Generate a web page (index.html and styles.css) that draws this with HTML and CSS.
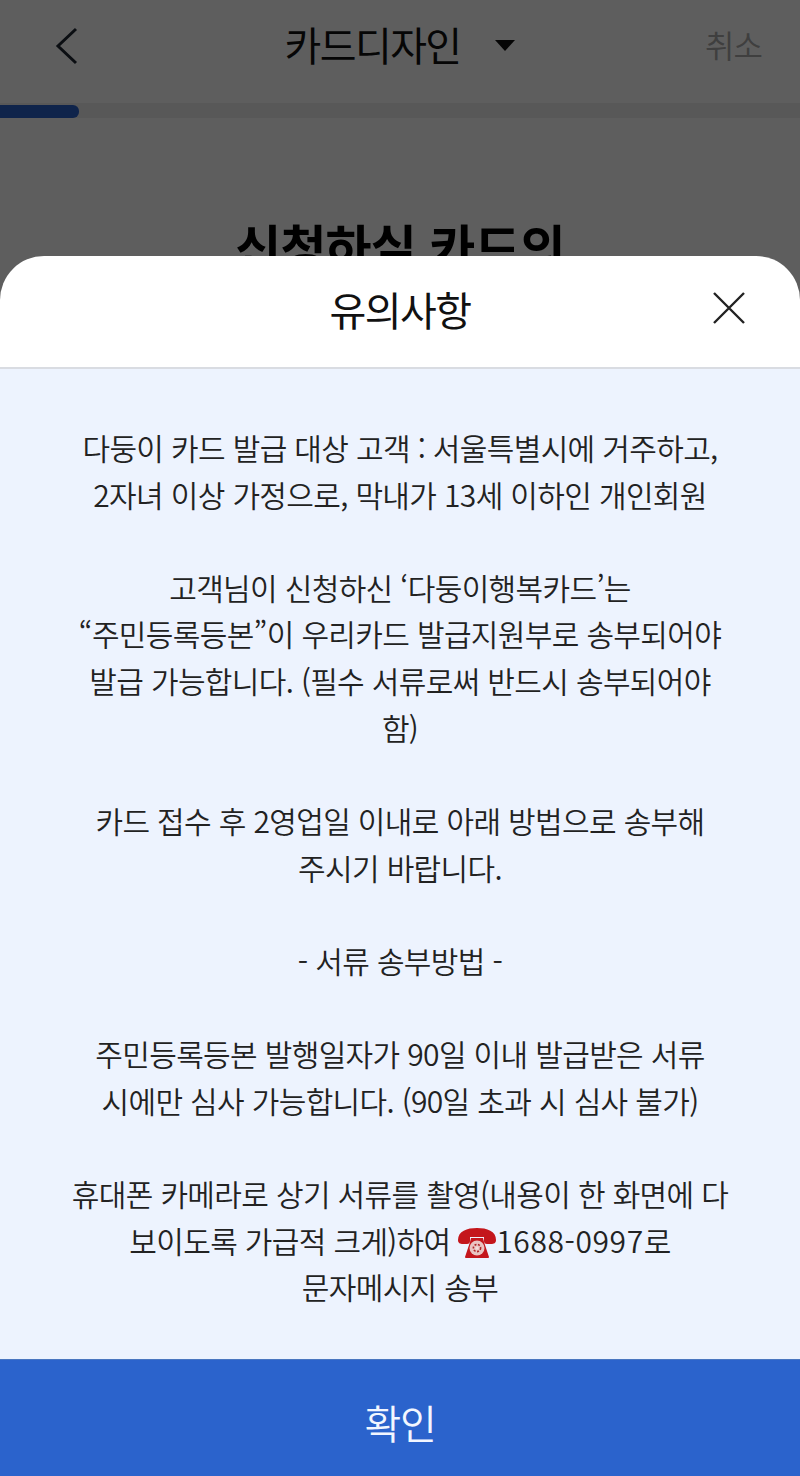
FILE: index.html
```html
<!DOCTYPE html>
<html lang="ko">
<head>
<meta charset="utf-8">
<title>유의사항</title>
<link rel="stylesheet" href="styles.css">
</head>
<body>
<div class="screen">
  <header class="topbar">
    <svg class="back" viewBox="0 0 26 40" width="26" height="40"><path d="M22 3 L4 20 L22 37" fill="none" stroke="#1f2733" stroke-width="3"/></svg>
    <div class="page-title"><span>카드디자인</span><i class="caret"></i></div>
    <span class="cancel">취소</span>
  </header>
  <div class="track"><div class="bar"></div></div>
  <h1 class="heading">신청하실 카드의</h1>
  <div class="dim"></div>
  <section class="sheet">
    <div class="sheet-head">
      <h2 class="sheet-title">유의사항</h2>
      <svg class="close" viewBox="0 0 34 34" width="34" height="34"><path d="M2 2 L32 32 M32 2 L2 32" fill="none" stroke="#222" stroke-width="2.4"/></svg>
    </div>
    <div class="sheet-body">
      <p>다둥이 카드 발급 대상 고객 : 서울특별시에 거주하고,<br>2자녀 이상 가정으로, 막내가 13세 이하인 개인회원</p>
      <p>고객님이 신청하신 ‘다둥이행복카드’는<br>“주민등록등본”이 우리카드 발급지원부로 송부되어야<br>발급 가능합니다. (필수 서류로써 반드시 송부되어야<br>함)</p>
      <p>카드 접수 후 2영업일 이내로 아래 방법으로 송부해<br>주시기 바랍니다.</p>
      <p>- 서류 송부방법 -</p>
      <p>주민등록등본 발행일자가 90일 이내 발급받은 서류<br>시에만 심사 가능합니다. (90일 초과 시 심사 불가)</p>
      <p>휴대폰 카메라로 상기 서류를 촬영(내용이 한 화면에 다<br>보이도록 가급적 크게)하여 <svg class="phone" viewBox="0 0 38 30" width="38" height="30"><path d="M0 12 C0 3 9 0 19 0 C29 0 38 3 38 12 C38 15 36 16 33 16 L29 16 C27 16 26 15 26 13 L26 9 L12 9 L12 13 C12 15 11 16 9 16 L5 16 C2 16 0 15 0 12 Z" fill="#c4161c"/><path d="M13 10 L25 10 L26 14 L31 29 C31 30 30 30 29 30 L9 30 C8 30 7 30 7 29 L12 14 Z" fill="#c4161c"/><circle cx="19" cy="20" r="7.5" fill="#e9c4c2"/><circle cx="19" cy="20" r="3.6" fill="none" stroke="#b0282a" stroke-width="1.6" stroke-dasharray="2 1.5"/><circle cx="19" cy="20" r="1.6" fill="#f3dcda"/></svg><span class="tel">1688-0997</span>로<br>문자메시지 송부</p>
    </div>
    <button class="confirm" type="button">확인</button>
  </section>
</div>
</body>
</html>
```
FILE: styles.css
```css
* { box-sizing: border-box; }
html, body { margin: 0; padding: 0; }
body { font-family: "Noto Sans CJK KR", "Noto Sans", sans-serif; background: #fff; }
.screen { position: relative; width: 800px; height: 1476px; overflow: hidden; background: #fff; }
.topbar { display: flex; align-items: center; justify-content: space-between; height: 103px; padding: 0 38px 16px 54px; position: relative; }
.back { display: block; position: relative; top: 2px; }
.page-title { display: flex; align-items: center; gap: 34px; font-size: 40px; font-weight: 400; letter-spacing: -1.6px; color: #111; margin-left: 14px; }
.caret { width: 0; height: 0; border-left: 10px solid transparent; border-right: 10px solid transparent; border-top: 11px solid #111; position: relative; top: 2px; }
.cancel { font-size: 32px; letter-spacing: -1px; color: #aaa; font-weight: 350; }
.track { height: 15px; background: #eeeeee; padding-top: 2px; }
.bar { width: 79px; height: 13px; background: #2b63cc; border-radius: 0 6px 6px 0; }
.heading { margin: 96px 0 0; text-align: center; font-size: 50px; font-weight: 700; letter-spacing: -.8px; color: #000; line-height: 62px; }
.dim { position: absolute; inset: 0; background: rgba(0, 0, 0, .63); }
.sheet { position: absolute; left: 0; right: 0; bottom: 0; top: 256px; display: flex; flex-direction: column; border-radius: 44px 44px 0 0; overflow: hidden; background: #fff; }
.sheet-head { position: relative; display: flex; align-items: center; justify-content: center; height: 113px; flex: none; border-bottom: 2px solid #d9dce2; padding-bottom: 6px; }
.sheet-title { margin: 0; font-size: 40px; font-weight: 400; letter-spacing: -1.6px; color: #111; }
.close { position: absolute; right: 54px; top: 35px; }
.sheet-body { flex: 1; background: #edf3fe; padding: 55px 0 0; text-align: center; font-size: 30px; font-weight: 350; line-height: 46.62px; letter-spacing: -.65px; color: #222; display: flex; flex-direction: column; gap: 46.62px; }
.sheet-body p { margin: 0; white-space: nowrap; }
.phone { vertical-align: -5px; }
.tel { letter-spacing: .6px; }
.confirm { flex: none; height: 117px; width: 100%; border: 0; border-top: 1px solid #4a76c0; background: #2b63cc; color: #f2f6ff; font-family: inherit; font-size: 40px; font-weight: 350; letter-spacing: -1.2px; padding: 8px 0 0; }
```
